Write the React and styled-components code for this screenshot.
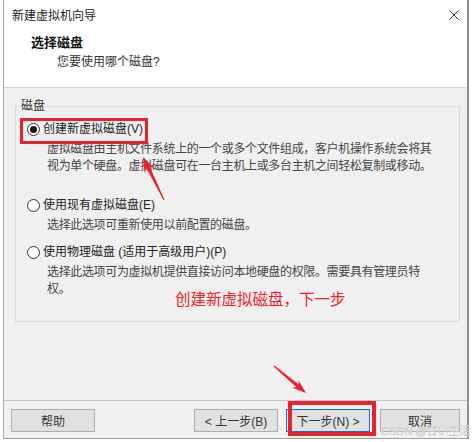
import styled, { createGlobalStyle } from 'styled-components';

const GlobalStyle = createGlobalStyle`
  html, body {
    margin: 0;
    padding: 0;
    background: #fff;
  }
  body {
    font-family: "Liberation Sans", "Noto Sans CJK SC", sans-serif;
    color: #1a1a1a;
  }
`;

const RED = '#e8232b';

const Page = styled.div`
  position: relative;
  width: 474px;
  height: 442px;
  overflow: hidden;
`;

const Dialog = styled.div`
  margin-left: 3px;
  width: 466px;
  box-sizing: border-box;
  border-left: 1px solid #a9a9a9;
  border-right: 2px solid #8e8e8e;
  border-bottom: 1px solid #9c9c9c;
  background: #f0f0f0;
`;

const Header = styled.div`
  height: 88px;
  box-sizing: border-box;
  border-bottom: 1px solid #d4d4d4;
  background: #fff;
`;

const TitleBar = styled.div`
  display: flex;
  align-items: center;
  justify-content: space-between;
  height: 29px;
  padding: 0 8px 0 8px;
  font-size: 12px;
  color: #1b1b1b;
`;

const Heading = styled.div`
  margin-top: 5px;
  padding-left: 27px;
  font-size: 13px;
  font-weight: bold;
  line-height: 18px;
  color: #111;
`;

const SubHeading = styled.div`
  margin-top: 1px;
  padding-left: 53px;
  font-size: 12px;
  line-height: 18px;
  color: #333;
`;

const Body = styled.div`
  height: 312px;
  box-sizing: border-box;
  padding-top: 10px;
`;

const Group = styled.fieldset`
  margin: 0 7px 0 11px;
  padding: 0 0 23px 0;
  min-width: 0;
  border: 1px solid #dadada;
`;

const Legend = styled.legend`
  margin-left: 3px;
  padding: 0 2px;
  font-size: 12px;
  line-height: 16px;
  color: #333;
`;

const Option = styled.label`
  position: relative;
  display: flex;
  align-items: center;
  gap: 3px;
  margin-top: ${(p) => p.$gap}px;
  padding-left: 11px;
  font-size: 12px;
  line-height: 16px;
  color: #222;
  white-space: nowrap;
`;

const Radio = styled.span`
  display: grid;
  place-items: center;
  width: 13px;
  height: 13px;
  box-sizing: border-box;
  border: 1px solid #333;
  border-radius: 50%;
  background: #fff;

  &::after {
    content: '';
    width: 7px;
    height: 7px;
    border-radius: 50%;
    background: ${(p) => (p.$checked ? '#1a1a1a' : 'transparent')};
  }
`;

const Desc = styled.div`
  margin-top: 4px;
  padding-left: 31px;
  font-size: 12px;
  line-height: 17px;
  letter-spacing: -0.35px;
  color: #444;
  white-space: nowrap;
`;

const Highlight = styled.span`
  position: absolute;
  left: ${(p) => p.$left}px;
  top: ${(p) => p.$top}px;
  width: ${(p) => p.$width}px;
  height: ${(p) => p.$height}px;
  box-sizing: border-box;
  border: ${(p) => p.$thick}px solid ${RED};
  pointer-events: none;
`;

const Footer = styled.div`
  display: flex;
  height: 38px;
  box-sizing: border-box;
  padding: 8px 7px 0 7px;
  border-top: 1px solid #c9c9c9;
`;

const ButtonSlot = styled.div`
  position: relative;
  margin-left: ${(p) => p.$gap || 0}px;
`;

const Button = styled.button`
  width: ${(p) => p.$width}px;
  height: 23px;
  padding: 0;
  box-sizing: border-box;
  border: 1px solid ${(p) => (p.$primary ? '#0078d7' : '#adadad')};
  background: #e1e1e1;
  font-family: "Liberation Sans", "Noto Sans CJK SC", sans-serif;
  font-size: 12px;
  color: #333;
`;

const Spacer = styled.div`
  flex: 1;
`;

const Annotation = styled.div`
  position: absolute;
  left: 175px;
  top: 288px;
  font-family: "Noto Sans CJK SC", sans-serif;
  font-size: 15.5px;
  line-height: 20px;
  color: ${RED};
  white-space: nowrap;
`;

const Watermark = styled.div`
  position: absolute;
  left: 381px;
  top: 425px;
  font-family: "Liberation Sans", "Noto Sans CJK SC", sans-serif;
  font-size: 11px;
  line-height: 13px;
  color: #c2c2c2;
  text-shadow: 0 0 1px #fff;
  white-space: nowrap;
`;

const Overlay = styled.svg`
  position: absolute;
  left: 0;
  top: 0;
  pointer-events: none;
`;

const arrowPoints = (x1, y1, x2, y2, head = 14, half = 5, w0 = 0.6, w1 = 1.8) => {
  const dx = x2 - x1;
  const dy = y2 - y1;
  const len = Math.hypot(dx, dy);
  const ux = dx / len;
  const uy = dy / len;
  const px = -uy;
  const py = ux;
  const bx = x2 - ux * head;
  const by = y2 - uy * head;
  const nx = x2 - ux * (head - 3);
  const ny = y2 - uy * (head - 3);
  return [
    [x1 + px * w0, y1 + py * w0],
    [nx + px * w1, ny + py * w1],
    [bx + px * half, by + py * half],
    [x2, y2],
    [bx - px * half, by - py * half],
    [nx - px * w1, ny - py * w1],
    [x1 - px * w0, y1 - py * w0],
  ]
    .map(([x, y]) => `${x.toFixed(1)},${y.toFixed(1)}`)
    .join(' ');
};

const CloseIcon = () => (
  <svg width="10" height="10" viewBox="0 0 10 10">
    <path d="M0.5 0.5 L9.5 9.5 M9.5 0.5 L0.5 9.5" stroke="#333" strokeWidth="1" />
  </svg>
);

const App = () => {
  return (
    <Page>
      <GlobalStyle />
      <Dialog>
        <Header>
          <TitleBar>
            <span>新建虚拟机向导</span>
            <CloseIcon />
          </TitleBar>
          <Heading>选择磁盘</Heading>
          <SubHeading>您要使用哪个磁盘?</SubHeading>
        </Header>

        <Body>
          <Group>
            <Legend>磁盘</Legend>

            <Option $gap={7}>
              <Radio $checked />
              <span>创建新虚拟磁盘(V)</span>
              <Highlight $left={4} $top={-3} $width={128} $height={26} $thick={3.5} />
            </Option>
            <Desc>
              虚拟磁盘由主机文件系统上的一个或多个文件组成，客户机操作系统会将其
              <br />
              视为单个硬盘。虚拟磁盘可在一台主机上或多台主机之间轻松复制或移动。
            </Desc>

            <Option $gap={22}>
              <Radio />
              <span>使用现有虚拟磁盘(E)</span>
            </Option>
            <Desc>选择此选项可重新使用以前配置的磁盘。</Desc>

            <Option $gap={10}>
              <Radio />
              <span>使用物理磁盘 (适用于高级用户)(P)</span>
            </Option>
            <Desc>
              选择此选项可为虚拟机提供直接访问本地硬盘的权限。需要具有管理员特
              <br />
              权。
            </Desc>
          </Group>
        </Body>

        <Footer>
          <Button $width={84}>帮助</Button>
          <Spacer />
          <ButtonSlot>
            <Button $width={84}>&lt; 上一步(B)</Button>
          </ButtonSlot>
          <ButtonSlot $gap={8}>
            <Button $width={84} $primary>下一步(N) &gt;</Button>
            <Highlight $left={2} $top={-8} $width={88} $height={35} $thick={4} />
          </ButtonSlot>
          <ButtonSlot $gap={10}>
            <Button $width={80}>取消</Button>
          </ButtonSlot>
        </Footer>
      </Dialog>

      <Annotation>创建新虚拟磁盘，下一步</Annotation>
      <Watermark>CSDN @甘い生活</Watermark>

      <Overlay width="474" height="442" viewBox="0 0 474 442">
        <polygon points={arrowPoints(164, 200, 143, 157, 15, 5.5)} fill={RED} />
        <polygon points={arrowPoints(274, 366, 306, 393)} fill={RED} />
      </Overlay>
    </Page>
  );
};

export default App;
